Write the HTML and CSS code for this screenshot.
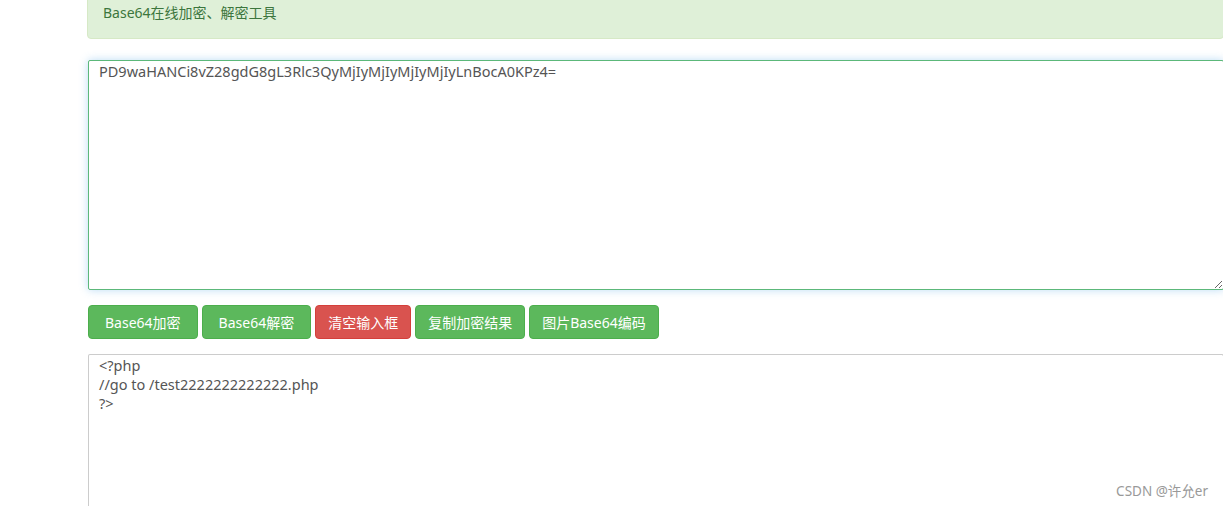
FILE: index.html
```html
<!DOCTYPE html>
<html lang="zh">
<head>
<meta charset="utf-8">
<title>Base64在线加密、解密工具</title>
<link rel="stylesheet" href="styles.css">
</head>
<body>
<div class="page">
  <div class="alert">Base64在线加密、解密工具</div>
  <textarea class="box box-focus">PD9waHANCi8vZ28gdG8gL3Rlc3QyMjIyMjIyMjIyMjIyLnBocA0KPz4=</textarea>
  <div class="actions">
    <button class="btn btn-success btn-wide">Base64加密</button>
    <button class="btn btn-success btn-wide">Base64解密</button>
    <button class="btn btn-danger">清空输入框</button>
    <button class="btn btn-success">复制加密结果</button>
    <button class="btn btn-success">图片Base64编码</button>
  </div>
  <textarea class="box box-result">&lt;?php
//go to /test2222222222222.php
?&gt;</textarea>
</div>
<div class="watermark">CSDN @许允er</div>
</body>
</html>
```
FILE: styles.css
```css
html, body {
  margin: 0;
  padding: 0;
  background: #fff;
  overflow: hidden;
  height: 506px;
}
body {
  font-family: "Noto Sans", "Noto Sans CJK SC", sans-serif;
  font-size: 14px;
  color: #555;
}
.page {
  margin-top: -14px;
  padding-left: 88px;
  width: 1136px;
  display: flex;
  flex-direction: column;
}
.alert {
  margin-left: -1px;
  height: 53px;
  box-sizing: border-box;
  padding: 17px 15px 0;
  background: #dff0d8;
  border: 1px solid #d6e9c6;
  border-radius: 4px;
  color: #3c763d;
  font-size: 14px;
  line-height: 18px;
}
.box {
  display: block;
  box-sizing: border-box;
  width: 100%;
  margin: 0;
  font-family: "Noto Sans", "Noto Sans CJK SC", sans-serif;
  font-size: 14.5px;
  line-height: 19px;
  color: #555;
  padding: 1px 10px;
  border-radius: 2px;
  outline: none;
}
.box-focus {
  margin-top: 21px;
  height: 230px;
  border: 1px solid #5cb87a;
  box-shadow: 0 0 8px rgba(102, 175, 233, .45);
}
.box-result {
  height: 200px;
  padding-top: 1px;
  border: 1px solid #ccc;
  border-bottom: none;
  resize: none;
}
.actions {
  display: flex;
  gap: 4px;
  margin: 15px 0;
}
.btn {
  height: 34px;
  padding: 0 12px;
  border-radius: 4px;
  font-family: "Noto Sans", "Noto Sans CJK SC", sans-serif;
  font-size: 14px;
  color: #fff;
  cursor: pointer;
}
.btn-wide {
  padding: 0 16px;
}
.btn-success {
  background: #5cb85c;
  border: 1px solid #4cae4c;
}
.btn-danger {
  background: #d9534f;
  border: 1px solid #d43f3a;
}
.watermark {
  position: absolute;
  right: 15px;
  top: 480px;
  font-size: 13.5px;
  color: #999;
  font-family: "Noto Sans", "Noto Sans CJK SC", sans-serif;
}
```
